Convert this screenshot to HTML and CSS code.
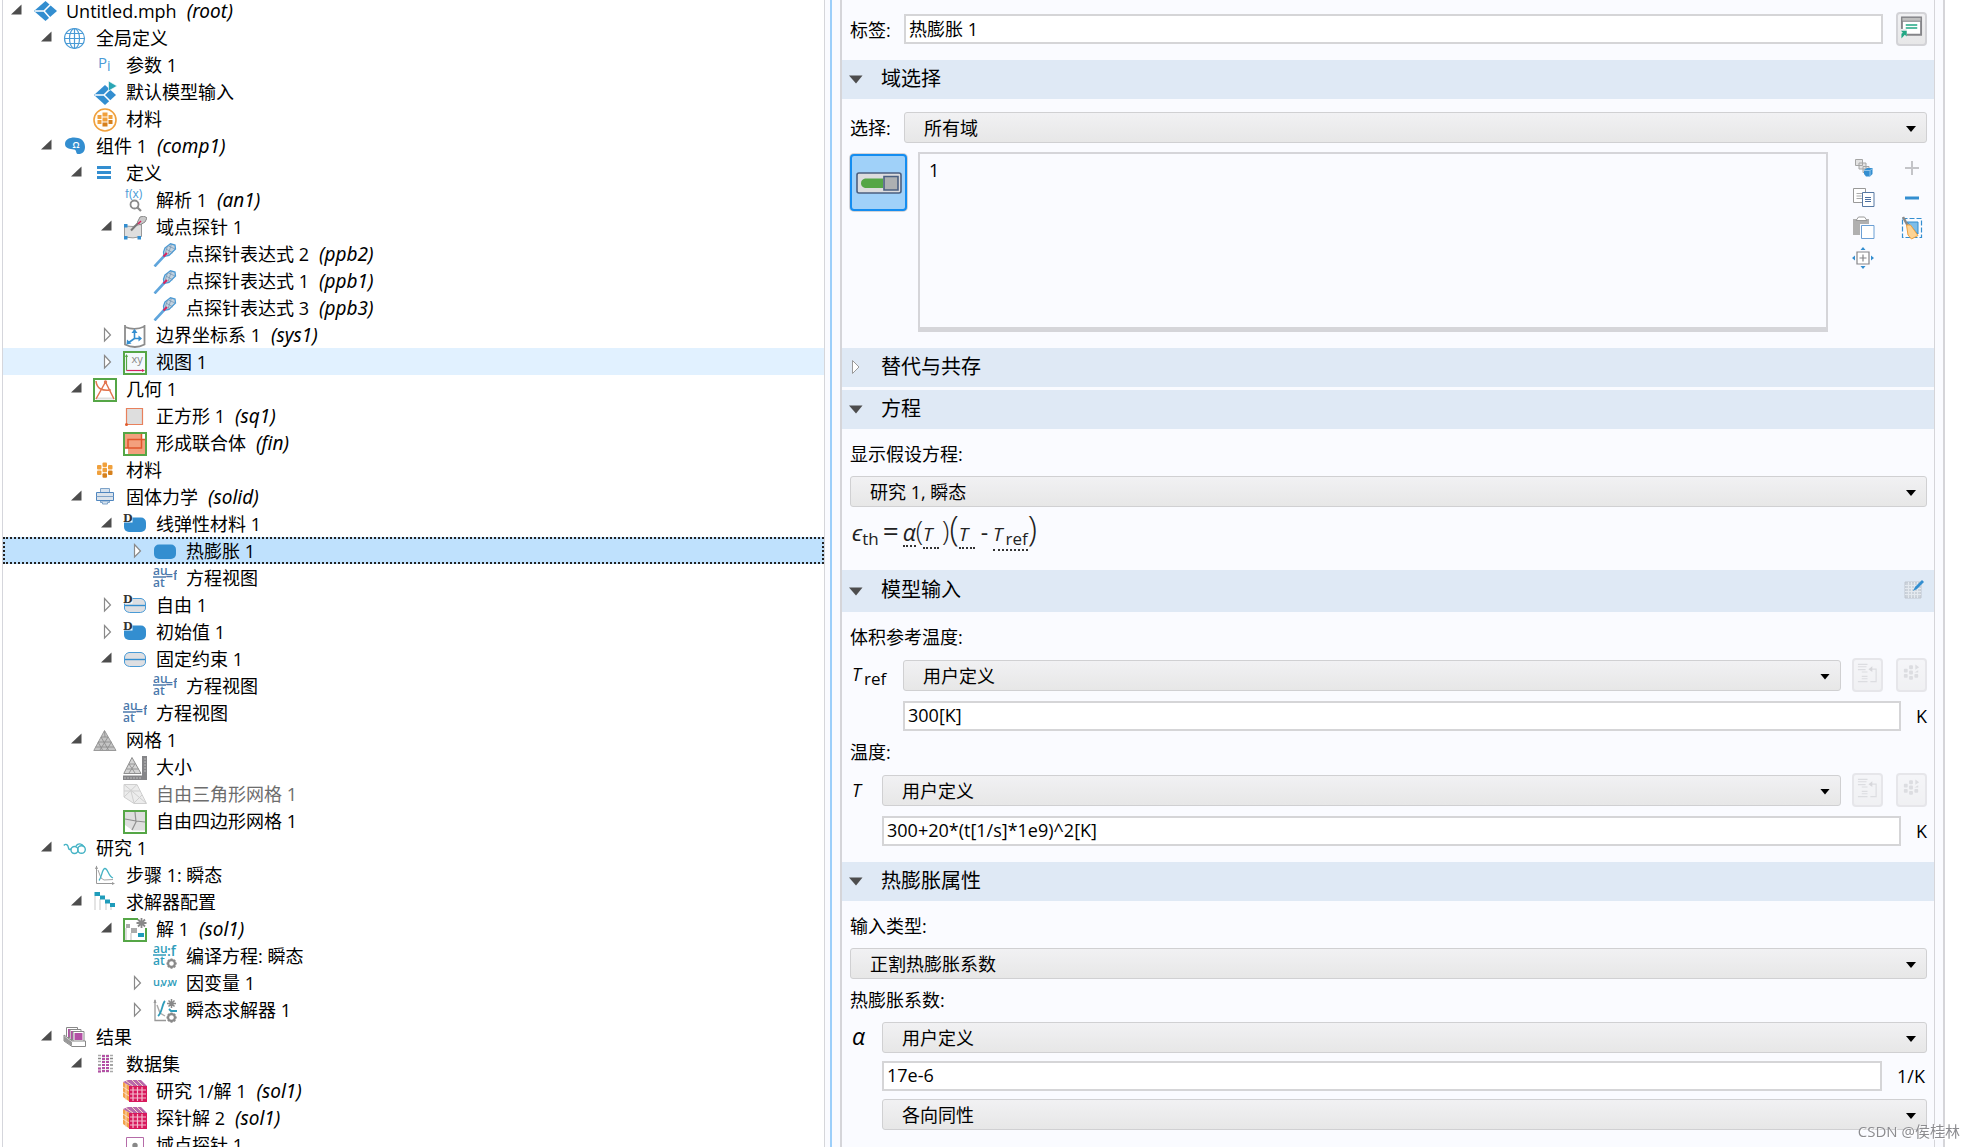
FILE: index.html
```html
<!DOCTYPE html>
<html lang="zh-CN">
<head>
    <meta charset="UTF-8">
    <meta name="viewport" content="width=device-width, initial-scale=1.0">
    <title>Untitled.mph</title>
    <link rel="stylesheet" href="styles.css">
</head>
<body>
    <!-- Icon sprite -->
    <svg class="sprite" aria-hidden="true">
        <symbol id="a-open" viewBox="0 0 30 27"><path d="M18.500 7.500V17.500H8z" fill="#4d4d4d"/></symbol>
        <symbol id="a-closed" viewBox="0 0 30 27"><path d="M11.500 7.500L17.500 14L11.500 20z" fill="#fff" stroke="#8a8a8a" stroke-width="1.200"/></symbol>
        <symbol id="h-open" viewBox="0 0 14 16"><path d="M0 4.500H13.500L7 12.500z" fill="#4d4d4d"/></symbol>
        <symbol id="h-closed" viewBox="0 0 14 16"><path d="M3.500 1.500L10 8L3.500 14.500z" fill="#fff" stroke="#9a9a9a"/></symbol>
        <symbol id="i-root" viewBox="0 0 24 24"><path d="M12.500 1L24 11L12.500 21L1 11z" fill="#338ed0"/><path d="M2 11H11L18 4M11 11L18 19" stroke="#fff" stroke-width="1.500" fill="none"/></symbol>
        <symbol id="i-globe" viewBox="0 0 24 24"><g fill="none" stroke="#4a9bd6" stroke-width="1.200"><circle cx="11.500" cy="11.500" r="10"/><ellipse cx="11.500" cy="11.500" rx="5" ry="10"/><path d="M11.500 1.500V21.500M1.500 11.500H21.500M3 6.500H20M3 16.500H20"/></g></symbol>
        <symbol id="i-param" viewBox="0 0 24 24"><text x="5" y="14" class="ico-text blue" font-size="15">P</text><text x="14" y="17" class="ico-text blue" font-size="14">i</text></symbol>
        <symbol id="i-input" viewBox="0 0 24 24"><path d="M12 4L23 14L12 24L1 14z" fill="#338ed0"/><path d="M2 14H11L18 7M11 14L18 21" stroke="#fff" stroke-width="1.500" fill="none"/><path d="M15.500 0V10L24 5z" fill="#2aa6b5" stroke="#fff" stroke-width=".6"/></symbol>
        <symbol id="i-matcircle" viewBox="0 0 24 24"><circle cx="12" cy="12" r="11" fill="#fffdf8" stroke="#f0a03c" stroke-width="1.600"/><g fill="#f0a03c"><path d="M4.500 7h4v4h-4zM9.500 4.500h5v4h-5zM15.500 7h4v4h-4zM9.500 9.500h5v4h-5zM4.500 12h4v4h-4z"/><path d="M9.500 14.500h5v4h-5zM15.500 12h4v4h-4z" fill="#d6801c"/></g></symbol>
        <symbol id="i-comp" viewBox="0 0 24 24"><path d="M2 9C2 3 10 1.500 15 3C20 4 22 8 22 12C22 17 19 19.500 14.500 19C12.500 18 14 15 11 14.500C7 14 2 13.500 2 9z" fill="#338ed0"/><text x="9.500" y="12.500" fill="#fff" class="ico-text bold" font-size="9">Ω</text></symbol>
        <symbol id="i-def" viewBox="0 0 24 24"><path d="M4 5.500h14M4 10.500h14M4 15.500h14" stroke="#338ed0" stroke-width="3"/></symbol>
        <symbol id="i-fx" viewBox="0 0 24 24"><text x="2" y="9" class="ico-text blue" font-size="12">f(x)</text><circle cx="11.500" cy="15.500" r="4" fill="none" stroke="#8a8a8a" stroke-width="1.800"/><path d="M14.500 18.500L18 22" stroke="#8a8a8a" stroke-width="2.200"/></symbol>
        <symbol id="i-probe" viewBox="0 0 24 24"><path d="M1.500 10Q10 12 18.500 8V20.500Q10 23 1.500 21z" fill="#dedede" stroke="#999"/><path d="M1 8h3.500v3.500H1zM1 20h3.500v3.500H1zM14.500 20H18v3.500h-3.500z" fill="#338ed0"/><path d="M8 14.500L18 4" stroke="#777" stroke-width="2"/><path d="M17 1L21 0L24 2L22 6L17 9L14.500 6z" fill="#c8c8c8" stroke="#888"/><path d="M15 8L18 5" stroke="#d8235e" stroke-width="1.500"/></symbol>
        <symbol id="i-pen" viewBox="0 0 24 24"><path d="M1.500 23.500L12.500 11.500" stroke="#5fa5dc" stroke-width="2.600"/><path d="M12 5L17.500 0.800L22 2L22.500 6L16 12.500L11 13.500L10.500 9z" fill="#c5d3df" stroke="#4a9bd6" stroke-width="1.300"/><path d="M13 6L20 10M15.500 3L22 6M18.500 1L15 12M14.500 3L12 11" stroke="#7998b5" stroke-width=".8"/><path d="M10.500 13.500L14 10" stroke="#d8235e" stroke-width="2"/></symbol>
        <symbol id="i-sys" viewBox="0 0 24 24"><path d="M2 1V20.500Q12 25.500 21.500 20.500V1M2 3Q12 7 21.500 2.500" fill="none" stroke="#8c8c8c" stroke-width="1.800"/><path d="M11.500 6V14.500H17.500M11.500 14.500L5 19" fill="none" stroke="#338ed0" stroke-width="1.600"/><path d="M8.500 9L11.500 5L14.500 9zM15.500 11.500L19 14.500L15.500 17.500zM4 15.500L3.500 20.500L8.500 19.500z" fill="#338ed0"/></symbol>
        <symbol id="i-view" viewBox="0 0 24 24"><path d="M1 1h22v22H1z" fill="#f4f9fc" stroke="#55a646" stroke-width="2"/><path d="M3.500 4V19.500" stroke="#55a646" stroke-width="1.200"/><path d="M2 6L3.500 3L5 6z" fill="#55a646"/><path d="M3.500 19.500H20" stroke="#d8235e" stroke-width="1.200"/><path d="M19 18L22 19.500L19 21z" fill="#d8235e"/><text x="8.500" y="12" class="ico-text" fill="#888" font-size="11">xy</text></symbol>
        <symbol id="i-geom" viewBox="0 0 24 24"><path d="M1 1h22v22H1z" fill="#fff" stroke="#55a646" stroke-width="2"/><path d="M3 20.500H21" stroke="#ddd" stroke-width="2"/><path d="M3 21L12.500 4L21 21M3 3Q4 14 18 12" fill="none" stroke="#e3754f" stroke-width="1.500"/><circle cx="12.500" cy="4" r="1.700" fill="#e3754f"/></symbol>
        <symbol id="i-square" viewBox="0 0 24 24"><path d="M3.500 3.500h16v16h-16z" fill="#dedede" stroke="#e8805c" stroke-width="1.200"/><circle cx="3.500" cy="19.500" r="1.500" fill="#e05a2b"/></symbol>
        <symbol id="i-union" viewBox="0 0 24 24"><path d="M1 1h22v22H1z" fill="#fff" stroke="#55a646" stroke-width="2"/><path d="M2 2h17v14H2zM5 7h17v15H5z" fill="#f3a07d"/><path d="M2 16H18.500V2M5 16V7.500H22" fill="none" stroke="#e0562b" stroke-width="1.500"/></symbol>
        <symbol id="i-mat" viewBox="0 0 24 24"><g fill="#f0a03c"><rect x="4" y="6" width="4.500" height="4.500" rx="1"/><rect x="9.500" y="3.500" width="4.500" height="4.500" rx="1"/><rect x="15" y="6" width="4.500" height="4.500" rx="1"/><rect x="9.500" y="8.800" width="4.500" height="4.500" rx="1"/><rect x="4" y="11.500" width="4.500" height="4.500" rx="1"/><rect x="15" y="11.500" width="4.500" height="4.500" rx="1" fill="#d6801c"/><rect x="9.500" y="14.200" width="4.500" height="4.500" rx="1" fill="#d6801c"/></g></symbol>
        <symbol id="i-solid" viewBox="0 0 24 24"><path d="M7.500 7V2.500h9V7M7.500 15v1.500h2V18h5v-1.500h2V15z" fill="#d6e2ee" stroke="#7da2c8"/><path d="M3.500 6.500h17v8h-17z" fill="#dbe3eb" stroke="#4f86bf"/><path d="M3.500 10.500h17" stroke="#7da2c8"/></symbol>
        <symbol id="i-fill" viewBox="0 0 24 24"><rect x="1" y="4.500" width="22" height="14.500" rx="5" fill="#338ed0"/></symbol>
        <symbol id="i-line" viewBox="0 0 24 24"><path d="M6 4.500H18Q22.500 5.500 22.500 10V14Q22.500 17.500 17.500 18.500H6.500Q1.500 17.500 1.500 14V10Q1.500 5.500 6 4.500z" fill="#dedfe2" stroke="#4a9bd6"/><path d="M2 11.500H22" stroke="#338ed0" stroke-width="1.400"/></symbol>
        <symbol id="i-dom" viewBox="0 0 24 24"><use href="#i-fill"/><path d="M0 0H9.500V9.500H0z" fill="#fff"/><text x="0" y="8.500" class="ico-text slab" font-size="11">D</text></symbol>
        <symbol id="i-dline" viewBox="0 0 24 24"><use href="#i-line"/><path d="M0 0H9.500V9.500H0z" fill="#fff"/><text x="0" y="8.500" class="ico-text slab" font-size="11">D</text></symbol>
        <symbol id="i-eq" viewBox="0 0 24 24"><g class="ico-text bold" fill="#4b78ab"><text x="0" y="8" font-size="12">au</text><text x="0" y="19.500" font-size="12">at</text><text x="12.500" y="13" font-size="13">=f</text></g><path d="M0 10H13" stroke="#4b78ab" stroke-width="1.500"/></symbol>
        <symbol id="i-mesh" viewBox="0 0 24 24"><path d="M11.500 1.500L23 21.500H.8z" fill="#c4c4c4" stroke="#9a9a9a"/><path d="M8 8H15M5 13H18.500M2.500 18H21M8 8L15.500 21M15 8L7 21M5 13L9.500 21M18.500 13L13.500 21M11.500 2L12 8" stroke="#8f8f8f" fill="none" stroke-width=".9"/></symbol>
        <symbol id="i-size" viewBox="0 0 24 24"><path d="M9 1.500L18 17.500H.8z" fill="#d4d4d4" stroke="#8f8f8f"/><path d="M6 8H12M3.500 13H15.500M6 8L12 17M12 8L6 17" stroke="#8f8f8f" fill="none" stroke-width=".9"/><path d="M19 0H24V24H0V19.500H19z" fill="#858588"/><path d="M2 21v2M5 21v2M8 21v2M11 21v2M14 21v2M17 21v2M21 3h2M21 6h2M21 9h2M21 12h2M21 15h2" stroke="#bbb"/></symbol>
        <symbol id="i-tri" viewBox="0 0 24 24"><path d="M1 1.500H14L23.500 20.500H11L1 14z" fill="#ececec" stroke="#cfcfcf"/><path d="M1 1.500L23 20M14 1.500L1 14M8 8L11 20M17 8H1M19 12L11 20" stroke="#cfcfcf" fill="none"/></symbol>
        <symbol id="i-quad" viewBox="0 0 24 24"><path d="M1 1h22v22H1z" fill="#dedede" stroke="#55a646" stroke-width="2"/><path d="M2 15L9 20L13 22H2zM13 22H22V20.500H10z" fill="#fff"/><path d="M12 2L13 12L9 20M2 9L13 11L22 12" stroke="#8f8f8f" fill="none" stroke-width="1.200"/></symbol>
        <symbol id="i-study" viewBox="0 0 24 24"><g fill="none" stroke="#45b3c5" stroke-width="1.400"><circle cx="11.500" cy="13" r="3.500"/><circle cx="18.500" cy="12.500" r="3.800"/><path d="M.8 8.500C3 6 5 8 5.500 11C6 13 7 12.500 8 12M13 9C15 6 19 6 21 10"/></g></symbol>
        <symbol id="i-step" viewBox="0 0 24 24"><path d="M3.500 2V19.500H20" fill="none" stroke="#999"/><path d="M2 5L3.500 1.500L5 5zM19 18L22 19.500L19 21z" fill="#999"/><path d="M5 6L8 14L11 16L20 15.500" stroke="#a5a5a5" fill="none"/><path d="M6 16.500C9 13 9 4.500 12 4.500S15 12 20 14" stroke="#45b3c5" stroke-width="1.300" fill="none"/></symbol>
        <symbol id="i-solver" viewBox="0 0 24 24"><path d="M2 5V19M7 8V19M13 12V19M18 15V19" stroke="#c9c9c9"/><path d="M1.500 1h5.500v4H1.500zM7 4.500h5v4H7zM12 8.500h5v4h-5zM17 12h5v4h-5z" fill="#1f9cba"/></symbol>
        <symbol id="i-sol" viewBox="0 0 24 24"><path d="M1 1h22v22H1z" fill="#fff" stroke="#55a646" stroke-width="2"/><path d="M3 6h4v4H3zM8 10h6v5H8z" fill="#aaa"/><path d="M3 10V22M8 15V22" stroke="#bbb"/><path d="M15 15h6v4h-6z" fill="#1f9cba"/><path d="M15 0H24V10H15z" fill="#fff"/><path d="M18.500 0V10M13.500 5H23.500M15 1.500L22 8.500M22 1.500L15 8.500" stroke="#888" stroke-width="1.800"/></symbol>
        <symbol id="i-gear" viewBox="0 0 24 24"><circle cx="18.500" cy="18.500" r="3.400" fill="none" stroke="#8a8a8a" stroke-width="2.200"/><path d="M18.500 13.500V15M18.500 22V23.700M13.500 18.500H15M22 18.500H23.700M15 15L16 16M21 21L22.200 22.200M22.200 15L21 16M15 22.200L16 21" stroke="#8a8a8a" stroke-width="2"/></symbol>
        <symbol id="i-comp-eq" viewBox="0 0 24 24"><g class="ico-text bold" fill="#2f9dbb"><text x="0" y="8" font-size="12">au</text><text x="0" y="19.500" font-size="12">at</text><text x="14" y="11" font-size="14">:f</text></g><path d="M0 10H13" stroke="#2f9dbb" stroke-width="1.500"/><use href="#i-gear"/></symbol>
        <symbol id="i-uvw" viewBox="0 0 24 24"><g class="ico-text bold" fill="#2f9dbb" font-size="11"><text x="0" y="14">u,</text><text x="8" y="14">v,</text><text x="15" y="14">w</text></g></symbol>
        <symbol id="i-time" viewBox="0 0 24 24"><path d="M2 1V21.500H13" fill="none" stroke="#999" stroke-width="1.300"/><path d="M0.500 4L2 0L3.500 4z" fill="#999"/><path d="M4 6L7 14L12 17" stroke="#aaa" fill="none" stroke-width="1.400"/><path d="M5 17C9 14 9 5 12 2M16 10L18 12H24" stroke="#2f9dbb" stroke-width="1.800" fill="none"/><path d="M18.500 0V9M14 4.500H23M15.500 1.500L21.500 7.500M21.500 1.500L15.500 7.500" stroke="#888" stroke-width="1.500"/><use href="#i-gear"/></symbol>
        <symbol id="i-results" viewBox="0 0 24 24"><path d="M3.500 1.500h11v10h-11z" fill="#fff" stroke="#888"/><path d="M5 3h8v8H5z" fill="#b350a5"/><path d="M7 3.500h11v10H7z" fill="#fff" stroke="#888"/><path d="M8 5h9v8H8z" fill="#b350a5"/><path d="M10 5.500h11v10H10z" fill="#fff" stroke="#888"/><path d="M11.500 7h8v7h-8z" fill="#b350a5"/><path d="M1 9L9 15H22.500V20.500H9L1 15z" fill="#fff" stroke="#888"/><path d="M1 10L9 16V20L1 15z" fill="#999"/></symbol>
        <symbol id="i-data" viewBox="0 0 24 24"><g stroke-width="1.600" stroke-dasharray="3 1"><path d="M5 2.500h15M5 8.500h15M5 15.500h15M5 18.500h15" stroke="#a9a9a9"/><path d="M5 5.500h15M5 12h15" stroke="#888"/></g><path d="M10.500 2v17M14.500 2v17" stroke="#b350a5" stroke-width="3" stroke-dasharray="2 1"/><path d="M5 14.500h3v2H5zM5 17.500h3v2H5z" fill="#b350a5"/></symbol>
        <symbol id="i-cube" viewBox="0 0 24 24"><path d="M0 2L7 6V22L0 17z" fill="#f3a24a"/><path d="M0 2L5 0H18L24 6H7z" fill="#b868ab"/><path d="M6 6H24V22H6z" fill="#d8195c"/><path d="M10 7V21M14.500 7V21M19 7V21M7 10H23M7 14H23M7 18H23" stroke="#f3bccf" stroke-width="1.200"/><path d="M0 7L6 11M0 12L6 16M3 4V20M3 1L10 6M9 0L15 6M14 0L20 6" stroke="#f9dcc0" stroke-width="1"/></symbol>
        <symbol id="i-point" viewBox="0 0 24 24"><path d="M3.500 3.500h17v17h-17z" fill="#fff" stroke="#b56ba8"/><circle cx="12" cy="11.500" r="2.700" fill="#888"/></symbol>
        <symbol id="i-goto" viewBox="0 0 24 24"><path d="M2 2h20v18H2z" fill="#fff" stroke="#858589" stroke-width="2"/><path d="M2 2h20v4H2z" fill="#c0c0c0" stroke="#858589"/><path d="M6 10h12M6 13h12" stroke="#22a884" stroke-width="1.600"/><path d="M0 14H7V24H0z" fill="#ececee"/><path d="M1 16H7V22L5 20L1.500 24V19L3 18z" fill="#22a884"/></symbol>
        <symbol id="i-chain" viewBox="0 0 24 24"><g fill="#e3e3e3" stroke="#a5a5a5"><path d="M4.500 3.500h7v6h-7zM8 7h7v6H8zM12 10.500h6v6h-6z"/></g><path d="M13 14L16 12H21.500V18L19 20.500H15L13 18z" fill="#338ed0"/><path d="M13 14.500H19V20M19 14.500L21.500 12.500" stroke="#8fc4ea" fill="none"/></symbol>
        <symbol id="i-copy" viewBox="0 0 24 24"><path d="M2.500 2.500h12v14h-12z" fill="#fff" stroke="#999"/><path d="M5.500 7.500h6M5.500 10h5M5.500 12.500h6" stroke="#aaa"/><path d="M11.500 6.500h11.500v14h-11.500z" fill="#fff" stroke="#5678a3"/><path d="M14 11.500h6M14 13.500h6M14 15.500h6" stroke="#4c6fa0" stroke-width="1.200"/></symbol>
        <symbol id="i-paste" viewBox="0 0 24 24"><path d="M2 3h16v16H2z" fill="#b0b0b0"/><path d="M5 4.500L7.500 1h6L16 4.500z" fill="#fff" stroke="#999"/><path d="M9 8h15v15H9z" fill="#fafbff"/><path d="M10.500 9.500h12.500v13h-12.500z" fill="#fff" stroke="#6b9fd4"/></symbol>
        <symbol id="i-zoomsel" viewBox="0 0 24 24"><path d="M6 6h12v12H6z" fill="#fff" stroke="#858589" stroke-width="1.200"/><path d="M8.500 12h7M12 8.500v7" stroke="#858589" stroke-width="1.200"/><path d="M12 1L14.500 4H9.500zM12 23L14.500 20H9.500zM1 12L4 9.500V14.500zM23 12L20 9.500V14.500z" fill="#338ed0"/></symbol>
        <symbol id="i-plus" viewBox="0 0 24 24"><path d="M5 12h14M12 5v14" stroke="#c3c4c8" stroke-width="2"/></symbol>
        <symbol id="i-minus" viewBox="0 0 24 24"><path d="M5 12h14" stroke="#338ed0" stroke-width="3"/></symbol>
        <symbol id="i-clear" viewBox="0 0 24 24"><path d="M2.500 2.500h19v19h-19z" fill="none" stroke="#338ed0" stroke-dasharray="5 2" stroke-width="1.200"/><path d="M7 6h11v12z" fill="#7fbde8" stroke="#338ed0"/><path d="M3 1L8 10" stroke="#888" stroke-width="2.500"/><path d="M6.500 9L10.500 9L18 19.500L11.500 23L8 19z" fill="#fdd394" stroke="#f0a03c"/></symbol>
        <symbol id="i-edit" viewBox="0 0 24 24"><path d="M4 4h16v16H4z" fill="#cdd4dc" stroke="#c0c6cf"/><path d="M7.500 4v16M10.500 4v16M13.500 4v16M16.500 4v16M4 7.500h16M4 10.500h16M4 13.500h16M4 16.500h16" stroke="#e4e9ef"/><path d="M12 13L14 9L21 2L23 4L16 11z" fill="#338ed0"/></symbol>
        <symbol id="i-from" viewBox="0 0 24 24"><path d="M2 3h10M2 5.500h9M2 8.500h8M6 11h6M6 15.500h6M6 18h6M2 21h10M15 21h6V8h-5" stroke="#c0c0c4" fill="none" stroke-width="1.200"/><path d="M13 8L17 5V11z" fill="#b5b5b9"/></symbol>
        <symbol id="i-matgo" viewBox="0 0 24 24"><g fill="#c0c0c4"><rect x="4" y="7.500" width="4" height="4" rx="1"/><rect x="9.500" y="4" width="4" height="4" rx="1"/><rect x="9.500" y="9.500" width="4" height="4" rx="1"/><rect x="4" y="13" width="4" height="4" rx="1"/><rect x="15" y="13" width="4" height="4" rx="1"/><rect x="9.500" y="15" width="4" height="4" rx="1"/><path d="M16 3L20 6L16 8.500zM15 11.500L19 9V11.500z"/></g></symbol>
        <symbol id="i-toggle" viewBox="0 0 46 22"><rect x="1" y="1" width="44" height="20" rx="2" fill="#dcdcde" stroke="#4b5f80" stroke-width="1.600"/><path d="M27 6.500V16H9Q5 15 5 11.300Q5 7.500 9 6.500z" fill="#55a646"/><path d="M28 4.500h14v13.500H28z" fill="#adb0b2" stroke="#4b5f80" stroke-width="1.600"/></symbol>
    </svg>

    <div class="app">
        <nav class="tree">
            <ul class="tree-list">
                <li class="node l0"><button class="toggle" aria-label="折叠"><svg><use href="#a-open"/></svg></button><svg class="icon"><use href="#i-root"/></svg><span>Untitled.mph</span><em>(root)</em></li>
                <li class="node l1"><button class="toggle" aria-label="折叠"><svg><use href="#a-open"/></svg></button><svg class="icon"><use href="#i-globe"/></svg><span>全局定义</span></li>
                <li class="node l2 leaf"><svg class="icon"><use href="#i-param"/></svg><span>参数 1</span></li>
                <li class="node l2 leaf"><svg class="icon"><use href="#i-input"/></svg><span>默认模型输入</span></li>
                <li class="node l2 leaf"><svg class="icon"><use href="#i-matcircle"/></svg><span>材料</span></li>
                <li class="node l1"><button class="toggle" aria-label="折叠"><svg><use href="#a-open"/></svg></button><svg class="icon"><use href="#i-comp"/></svg><span>组件 1</span><em>(comp1)</em></li>
                <li class="node l2"><button class="toggle" aria-label="折叠"><svg><use href="#a-open"/></svg></button><svg class="icon"><use href="#i-def"/></svg><span>定义</span></li>
                <li class="node l3 leaf"><svg class="icon"><use href="#i-fx"/></svg><span>解析 1</span><em>(an1)</em></li>
                <li class="node l3"><button class="toggle" aria-label="折叠"><svg><use href="#a-open"/></svg></button><svg class="icon"><use href="#i-probe"/></svg><span>域点探针 1</span></li>
                <li class="node l4 leaf"><svg class="icon"><use href="#i-pen"/></svg><span>点探针表达式 2</span><em>(ppb2)</em></li>
                <li class="node l4 leaf"><svg class="icon"><use href="#i-pen"/></svg><span>点探针表达式 1</span><em>(ppb1)</em></li>
                <li class="node l4 leaf"><svg class="icon"><use href="#i-pen"/></svg><span>点探针表达式 3</span><em>(ppb3)</em></li>
                <li class="node l3"><button class="toggle" aria-label="展开"><svg><use href="#a-closed"/></svg></button><svg class="icon"><use href="#i-sys"/></svg><span>边界坐标系 1</span><em>(sys1)</em></li>
                <li class="node l3 hovered"><button class="toggle" aria-label="展开"><svg><use href="#a-closed"/></svg></button><svg class="icon"><use href="#i-view"/></svg><span>视图 1</span></li>
                <li class="node l2"><button class="toggle" aria-label="折叠"><svg><use href="#a-open"/></svg></button><svg class="icon"><use href="#i-geom"/></svg><span>几何 1</span></li>
                <li class="node l3 leaf"><svg class="icon"><use href="#i-square"/></svg><span>正方形 1</span><em>(sq1)</em></li>
                <li class="node l3 leaf"><svg class="icon"><use href="#i-union"/></svg><span>形成联合体</span><em>(fin)</em></li>
                <li class="node l2 leaf"><svg class="icon"><use href="#i-mat"/></svg><span>材料</span></li>
                <li class="node l2"><button class="toggle" aria-label="折叠"><svg><use href="#a-open"/></svg></button><svg class="icon"><use href="#i-solid"/></svg><span>固体力学</span><em>(solid)</em></li>
                <li class="node l3"><button class="toggle" aria-label="折叠"><svg><use href="#a-open"/></svg></button><svg class="icon"><use href="#i-dom"/></svg><span>线弹性材料 1</span></li>
                <li class="node l4 selected"><button class="toggle" aria-label="展开"><svg><use href="#a-closed"/></svg></button><svg class="icon"><use href="#i-fill"/></svg><span>热膨胀 1</span></li>
                <li class="node l4 leaf"><svg class="icon"><use href="#i-eq"/></svg><span>方程视图</span></li>
                <li class="node l3"><button class="toggle" aria-label="展开"><svg><use href="#a-closed"/></svg></button><svg class="icon"><use href="#i-dline"/></svg><span>自由 1</span></li>
                <li class="node l3"><button class="toggle" aria-label="展开"><svg><use href="#a-closed"/></svg></button><svg class="icon"><use href="#i-dom"/></svg><span>初始值 1</span></li>
                <li class="node l3"><button class="toggle" aria-label="折叠"><svg><use href="#a-open"/></svg></button><svg class="icon"><use href="#i-line"/></svg><span>固定约束 1</span></li>
                <li class="node l4 leaf"><svg class="icon"><use href="#i-eq"/></svg><span>方程视图</span></li>
                <li class="node l3 leaf"><svg class="icon"><use href="#i-eq"/></svg><span>方程视图</span></li>
                <li class="node l2"><button class="toggle" aria-label="折叠"><svg><use href="#a-open"/></svg></button><svg class="icon"><use href="#i-mesh"/></svg><span>网格 1</span></li>
                <li class="node l3 leaf"><svg class="icon"><use href="#i-size"/></svg><span>大小</span></li>
                <li class="node l3 leaf disabled"><svg class="icon"><use href="#i-tri"/></svg><span>自由三角形网格 1</span></li>
                <li class="node l3 leaf"><svg class="icon"><use href="#i-quad"/></svg><span>自由四边形网格 1</span></li>
                <li class="node l1"><button class="toggle" aria-label="折叠"><svg><use href="#a-open"/></svg></button><svg class="icon"><use href="#i-study"/></svg><span>研究 1</span></li>
                <li class="node l2 leaf"><svg class="icon"><use href="#i-step"/></svg><span>步骤 1: 瞬态</span></li>
                <li class="node l2"><button class="toggle" aria-label="折叠"><svg><use href="#a-open"/></svg></button><svg class="icon"><use href="#i-solver"/></svg><span>求解器配置</span></li>
                <li class="node l3"><button class="toggle" aria-label="折叠"><svg><use href="#a-open"/></svg></button><svg class="icon"><use href="#i-sol"/></svg><span>解 1</span><em>(sol1)</em></li>
                <li class="node l4 leaf"><svg class="icon"><use href="#i-comp-eq"/></svg><span>编译方程: 瞬态</span></li>
                <li class="node l4"><button class="toggle" aria-label="展开"><svg><use href="#a-closed"/></svg></button><svg class="icon"><use href="#i-uvw"/></svg><span>因变量 1</span></li>
                <li class="node l4"><button class="toggle" aria-label="展开"><svg><use href="#a-closed"/></svg></button><svg class="icon"><use href="#i-time"/></svg><span>瞬态求解器 1</span></li>
                <li class="node l1"><button class="toggle" aria-label="折叠"><svg><use href="#a-open"/></svg></button><svg class="icon"><use href="#i-results"/></svg><span>结果</span></li>
                <li class="node l2"><button class="toggle" aria-label="折叠"><svg><use href="#a-open"/></svg></button><svg class="icon"><use href="#i-data"/></svg><span>数据集</span></li>
                <li class="node l3 leaf"><svg class="icon"><use href="#i-cube"/></svg><span>研究 1/解 1</span><em>(sol1)</em></li>
                <li class="node l3 leaf"><svg class="icon"><use href="#i-cube"/></svg><span>探针解 2</span><em>(sol1)</em></li>
                <li class="node l3 leaf"><svg class="icon"><use href="#i-point"/></svg><span>域点探针 1</span></li>
            </ul>
        </nav>

        <main class="settings">
            <div class="panel">
                <div class="label-row">
                    <label class="name" for="label">标签:</label>
                    <input class="field" type="text" id="label" value="热膨胀 1">
                    <button class="tool-btn" aria-label="转到源"><svg class="icon"><use href="#i-goto"/></svg></button>
                </div>

                <section>
                    <h2 class="section-head"><button class="head-btn"><svg><use href="#h-open"/></svg>域选择</button></h2>
                    <div class="section-body domain">
                        <div class="line">
                            <label class="name" for="domain">选择:</label>
                            <div class="select"><select id="domain"><option>所有域</option></select></div>
                        </div>
                        <div class="domain-row">
                            <button class="active-btn" aria-label="激活选择"><svg><use href="#i-toggle"/></svg></button>
                            <div class="domain-list">1</div>
                            <div class="domain-tools">
                                <button aria-label="创建选择"><svg class="icon"><use href="#i-chain"/></svg></button>
                                <button aria-label="添加"><svg class="icon"><use href="#i-plus"/></svg></button>
                                <button aria-label="复制选择"><svg class="icon"><use href="#i-copy"/></svg></button>
                                <button aria-label="移除"><svg class="icon"><use href="#i-minus"/></svg></button>
                                <button aria-label="粘贴选择"><svg class="icon"><use href="#i-paste"/></svg></button>
                                <button aria-label="清除选择"><svg class="icon"><use href="#i-clear"/></svg></button>
                                <button aria-label="缩放到选择"><svg class="icon"><use href="#i-zoomsel"/></svg></button>
                            </div>
                        </div>
                    </div>
                </section>

                <section class="collapsed">
                    <h2 class="section-head"><button class="head-btn"><svg><use href="#h-closed"/></svg>替代与共存</button></h2>
                </section>

                <section>
                    <h2 class="section-head"><button class="head-btn"><svg><use href="#h-open"/></svg>方程</button></h2>
                    <div class="section-body equation-body">
                        <label class="caption" for="study">显示假设方程:</label>
                        <div class="select"><select id="study"><option>研究 1, 瞬态</option></select></div>
                        <div class="equation">
                            <i>ϵ</i><sub>th</sub><span class="equals">=</span><i class="dots">α</i><span class="paren">(</span><i class="dots small wide">T</i><span class="paren">)</span><span class="paren big">(</span><i class="dots small wide">T</i><span class="dash">-</span><span class="dots ref"><i class="small">T</i><sub>ref</sub></span><span class="paren big">)</span>
                        </div>
                    </div>
                </section>

                <section>
                    <h2 class="section-head tall"><button class="head-btn"><svg><use href="#h-open"/></svg>模型输入</button><button class="head-tool" aria-label="编辑"><svg class="icon"><use href="#i-edit"/></svg></button></h2>
                    <div class="section-body inputs">
                        <label class="caption" for="tref">体积参考温度:</label>
                        <div class="line">
                            <label class="symbol wide" for="tref"><i>T</i><sub>ref</sub></label>
                            <div class="select"><select id="tref"><option>用户定义</option></select></div>
                            <button class="tool-btn" disabled aria-label="转到公共输入"><svg class="icon"><use href="#i-from"/></svg></button>
                            <button class="tool-btn" disabled aria-label="创建模型输入"><svg class="icon"><use href="#i-matgo"/></svg></button>
                        </div>
                        <div class="line value">
                            <span class="symbol wide"></span>
                            <input class="field" type="text" value="300[K]" aria-label="体积参考温度">
                            <span class="unit">K</span>
                        </div>
                        <label class="caption next" for="temp">温度:</label>
                        <div class="line">
                            <label class="symbol" for="temp"><i>T</i></label>
                            <div class="select"><select id="temp"><option>用户定义</option></select></div>
                            <button class="tool-btn" disabled aria-label="转到公共输入"><svg class="icon"><use href="#i-from"/></svg></button>
                            <button class="tool-btn" disabled aria-label="创建模型输入"><svg class="icon"><use href="#i-matgo"/></svg></button>
                        </div>
                        <div class="line value">
                            <span class="symbol"></span>
                            <input class="field" type="text" value="300+20*(t[1/s]*1e9)^2[K]" aria-label="温度">
                            <span class="unit">K</span>
                        </div>
                    </div>
                </section>

                <section>
                    <h2 class="section-head"><button class="head-btn"><svg><use href="#h-open"/></svg>热膨胀属性</button></h2>
                    <div class="section-body expansion">
                        <label class="caption" for="kind">输入类型:</label>
                        <div class="select"><select id="kind"><option>正割热膨胀系数</option></select></div>
                        <label class="caption" for="alpha">热膨胀系数:</label>
                        <div class="line">
                            <label class="symbol" for="alpha"><i class="greek">α</i></label>
                            <div class="select"><select id="alpha"><option>用户定义</option></select></div>
                        </div>
                        <div class="line">
                            <span class="symbol"></span>
                            <input class="field" type="text" value="17e-6" aria-label="热膨胀系数">
                            <span class="unit long">1/K</span>
                        </div>
                        <div class="line">
                            <span class="symbol"></span>
                            <div class="select"><select aria-label="各向异性"><option>各向同性</option></select></div>
                        </div>
                    </div>
                </section>
            </div>
        </main>
    </div>
    <div class="watermark">CSDN @侯桂林</div>
</body>
</html>
```

FILE: styles.css
```css
* {
    box-sizing: border-box;
}

body {
    margin: 0;
    height: 100vh;
    overflow: hidden;
    background: #ffffff;
    color: #000000;
    font-family: "Open Sans", "Noto Sans CJK SC", sans-serif;
    font-size: 18px;
    line-height: 27px;
}

button, input, select {
    font: inherit;
    color: inherit;
    margin: 0;
}

button {
    padding: 0;
    border: none;
    background: none;
}

svg {
    display: block;
}

.sprite {
    display: none;
}

.icon {
    width: 24px;
    height: 24px;
    flex: none;
}

.ico-text {
    font-family: "Open Sans", sans-serif;
}

.ico-text.blue {
    fill: #4a9bd6;
}

.ico-text.bold {
    font-weight: 600;
}

.ico-text.slab {
    font-family: "DejaVu Serif", serif;
    font-weight: bold;
    fill: #333333;
}

.app {
    display: grid;
    grid-template-columns: 825fr 1120fr 29px;
    height: 100%;
}

/* Model tree */
.tree {
    margin-left: 2px;
    border-left: 1px solid #d5d6dc;
    border-right: 1px solid #d5d6da;
    overflow: hidden;
}

.tree-list {
    margin: -3px 0 0;
    padding: 0;
    list-style: none;
}

.node {
    display: flex;
    align-items: center;
    height: 27px;
    white-space: nowrap;
}

.node span, .node em {
    padding-top: 2px;
}

.node em {
    margin-left: 10px;
    font-family: "Noto Sans", sans-serif;
    font-size: 19px;
}

.node .icon {
    margin: 2px 9px 0 0;
}

.l1 { padding-left: 30px; }
.l2 { padding-left: 60px; }
.l3 { padding-left: 90px; }
.l4 { padding-left: 120px; }

.toggle, .toggle svg {
    width: 30px;
    height: 27px;
}

.leaf::before {
    content: "";
    width: 30px;
}

.hovered {
    background: #e1f1ff;
}

.selected {
    background: #bfe1fd;
    outline: 2px dotted #222222;
    outline-offset: -2px;
}

.disabled {
    color: #6d6d6d;
}

/* Settings window */
.settings {
    display: flex;
    padding-left: 5px;
    background: #fafbff;
    border-right: 2px solid #d5d5d9;
    overflow: hidden;
}

.settings::before {
    content: "";
    width: 2px;
    margin-right: 8px;
    background: #9ccffa;
}

.panel {
    flex: 1;
    min-width: 0;
    margin-right: 8px;
    border-left: 2px solid #d5d5d9;
    border-right: 1px solid #d5d5d9;
}

.label-row {
    display: flex;
    align-items: center;
    padding: 12px 7px 14px 8px;
}

.label-row .tool-btn {
    margin-left: 13px;
}

.name {
    flex: none;
    width: 54px;
    padding-top: 2px;
}

.field {
    flex: 1;
    min-width: 0;
    height: 30px;
    padding: 0 3px 3px;
    border: 2px solid #d5d5d7;
    background: #ffffff;
}

.tool-btn {
    flex: none;
    width: 31px;
    height: 34px;
    padding: 0 2px 4px;
    border: 2px solid #d3d3d7;
    border-radius: 4px;
    background: linear-gradient(#f1f1f3, #e7e7e8);
}

.tool-btn .icon {
    width: 23px;
}

.tool-btn:disabled {
    opacity: 0.5;
}

/* Section headers */
.section-head {
    display: flex;
    align-items: center;
    justify-content: space-between;
    height: 39px;
    margin: 0;
    padding: 0 9px 3px 7px;
    background: #dfe9f5;
    font-size: 20px;
    font-weight: normal;
}

.section-head.tall {
    height: 42px;
}

.head-btn {
    display: flex;
    align-items: center;
    flex: 1;
}

.head-btn svg {
    width: 14px;
    height: 16px;
    margin: 2px 18px 0 0;
}

.collapsed {
    margin-bottom: 3px;
}

/* Section content */
.section-body {
    display: flex;
    flex-direction: column;
    padding: 12px 7px 16px 8px;
}

.line {
    display: flex;
    align-items: center;
}

.select {
    position: relative;
    display: flex;
    flex: 1;
    min-width: 0;
}

.select::after {
    content: "";
    position: absolute;
    top: 14px;
    right: 11px;
    width: 10px;
    height: 6px;
    background: #000000;
    clip-path: polygon(0 0, 100% 0, 50% 100%);
    pointer-events: none;
}

.select select {
    appearance: none;
    width: 100%;
    height: 31px;
    padding: 2px 30px 0 19px;
    border: 1px solid #d0d0d2;
    border-radius: 3px;
    background: linear-gradient(#f1f1f3, #e7e7e7);
}

.domain {
    gap: 9px;
    padding-top: 13px;
}

.domain-row {
    display: flex;
    align-items: flex-start;
}

.active-btn {
    display: flex;
    align-items: center;
    justify-content: center;
    width: 57px;
    height: 57px;
    margin-top: 2px;
    border: 2px solid #148df0;
    border-radius: 4px;
    background: #a0d1f9;
    box-shadow: 0 0 0 1px #d3d3d7;
}

.active-btn svg {
    width: 46px;
    height: 22px;
}

.domain-list {
    flex: 1;
    height: 180px;
    margin-left: 11px;
    padding: 3px 9px;
    border: 2px solid #d5d5d9;
    border-bottom-width: 5px;
}

.domain-tools {
    display: grid;
    grid-template-columns: 24px 24px;
    gap: 6px 25px;
    margin: 4px 3px 0 23px;
}

.caption {
    height: 27px;
}

.equation-body {
    padding-bottom: 0;
}

.equation-body .caption {
    margin-bottom: 8px;
}

.equation {
    display: flex;
    align-items: baseline;
    height: 63px;
    padding: 8px 2px;
    color: #222222;
    font-size: 23px;
}

.equation sub, .symbol sub {
    font-size: 17px;
    line-height: 20px;
    vertical-align: -4px;
}

.equation sub {
    position: relative;
    top: 4px;
}

.equation .small {
    font-size: 19px;
}

.equation .ref sub {
    top: 0;
}

.ref sub, .symbol sub {
    margin-left: 3px;
}

.equals {
    margin: 0 4px;
    font-size: 28px;
}

.dots {
    line-height: 25px;
    border-bottom: 2px dotted #333333;
}

.dots.wide {
    width: 16px;
    margin-right: 3px;
}

.paren {
    font-size: 27px;
    font-weight: 300;
}

.paren.big {
    font-size: 34px;
}

.dash {
    margin: 0 5px 0 3px;
}

.inputs .caption {
    margin-bottom: 7px;
}

.inputs .caption.next {
    margin-top: 8px;
}

.inputs .value {
    margin-top: 9px;
}

.inputs .tool-btn {
    margin-left: 11px;
}

.inputs .tool-btn + .tool-btn {
    margin-left: 13px;
}

.symbol {
    flex: none;
    width: 32px;
    padding-left: 2px;
}

.symbol.wide {
    width: 53px;
}

.greek {
    font-size: 23px;
}

.unit {
    width: 26px;
    padding-left: 15px;
}

.unit.long {
    width: 45px;
}

.expansion {
    gap: 8px;
}

.watermark {
    position: fixed;
    right: 14px;
    bottom: 5px;
    color: #8c8c90;
    font-size: 15px;
    line-height: 22px;
    text-shadow: 1px 1px 0 #ffffff;
}
```
